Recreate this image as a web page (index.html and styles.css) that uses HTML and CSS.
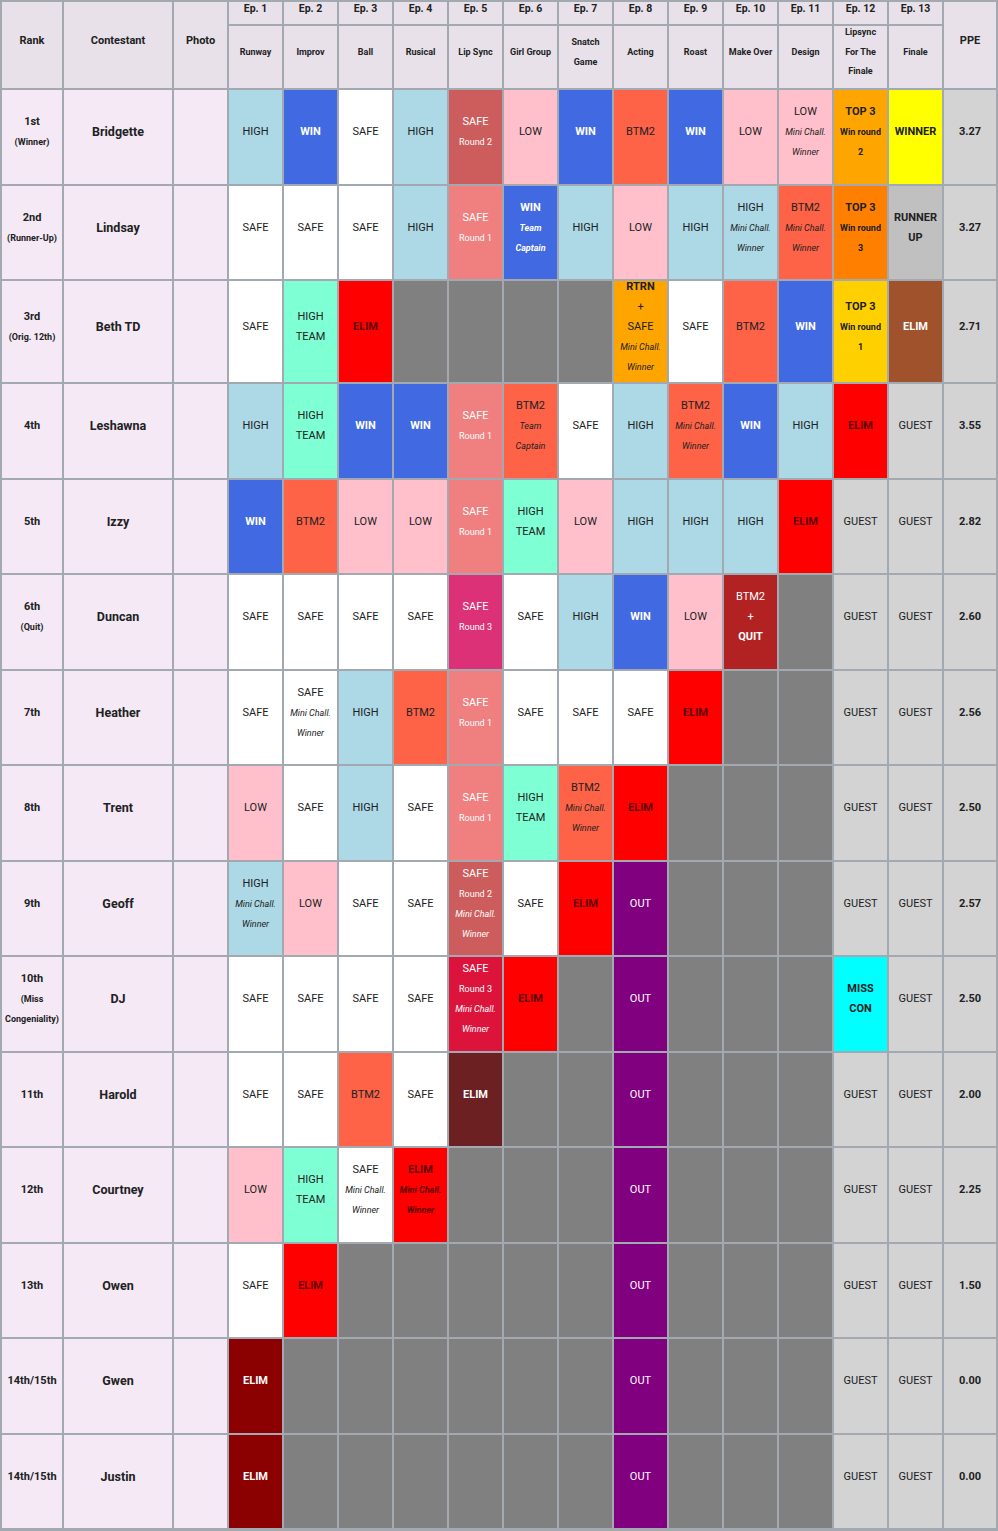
FILE: index.html
```html
<!DOCTYPE html>
<html lang="en">
<head>
<meta charset="utf-8">
<title>Contestant progress</title>
<link rel="stylesheet" href="styles.css">
</head>
<body>
<div class="t">
  <div class="h hb span2">Rank</div>
  <div class="h hb span2">Contestant</div>
  <div class="h hb span2">Photo</div>
  <div class="h ep">Ep. 1</div>
  <div class="h ep">Ep. 2</div>
  <div class="h ep">Ep. 3</div>
  <div class="h ep">Ep. 4</div>
  <div class="h ep">Ep. 5</div>
  <div class="h ep">Ep. 6</div>
  <div class="h ep">Ep. 7</div>
  <div class="h ep">Ep. 8</div>
  <div class="h ep">Ep. 9</div>
  <div class="h ep">Ep. 10</div>
  <div class="h ep">Ep. 11</div>
  <div class="h ep">Ep. 12</div>
  <div class="h ep">Ep. 13</div>
  <div class="h hb span2">PPE</div>
  <div class="h sub">Runway</div>
  <div class="h sub">Improv</div>
  <div class="h sub">Ball</div>
  <div class="h sub">Rusical</div>
  <div class="h sub">Lip Sync</div>
  <div class="h sub">Girl Group</div>
  <div class="h sub">Snatch<br>Game</div>
  <div class="h sub">Acting</div>
  <div class="h sub">Roast</div>
  <div class="h sub">Make Over</div>
  <div class="h sub">Design</div>
  <div class="h sub">Lipsync<br>For The<br>Finale</div>
  <div class="h sub">Finale</div>

  <!-- 1 Bridgette -->
  <div class="rk"><p>1st<br><span class="sm">(Winner)</span></p></div>
  <div class="nm">Bridgette</div>
  <div class="ph"></div>
  <div class="high">HIGH</div>
  <div class="win">WIN</div>
  <div class="safe">SAFE</div>
  <div class="high">HIGH</div>
  <div class="ls2"><p>SAFE<br><span class="sm">Round 2</span></p></div>
  <div class="low">LOW</div>
  <div class="win">WIN</div>
  <div class="btm">BTM2</div>
  <div class="win">WIN</div>
  <div class="low">LOW</div>
  <div class="low"><p>LOW<br><i class="sm">Mini Chall.<br>Winner</i></p></div>
  <div class="top-a"><p><b>TOP 3</b><br><b class="sm">Win round<br>2</b></p></div>
  <div class="winner">WINNER</div>
  <div class="ppe">3.27</div>

  <!-- 2 Lindsay -->
  <div class="rk"><p>2nd<br><span class="sm">(Runner-Up)</span></p></div>
  <div class="nm">Lindsay</div>
  <div class="ph"></div>
  <div class="safe">SAFE</div>
  <div class="safe">SAFE</div>
  <div class="safe">SAFE</div>
  <div class="high">HIGH</div>
  <div class="ls1"><p>SAFE<br><span class="sm">Round 1</span></p></div>
  <div class="win"><p>WIN<br><i class="sm">Team<br>Captain</i></p></div>
  <div class="high">HIGH</div>
  <div class="low">LOW</div>
  <div class="high">HIGH</div>
  <div class="high"><p>HIGH<br><i class="sm">Mini Chall.<br>Winner</i></p></div>
  <div class="btm"><p>BTM2<br><i class="sm">Mini Chall.<br>Winner</i></p></div>
  <div class="top-b"><p><b>TOP 3</b><br><b class="sm">Win round<br>3</b></p></div>
  <div class="runner">RUNNER<br>UP</div>
  <div class="ppe">3.27</div>

  <!-- 3 Beth TD -->
  <div class="rk"><p>3rd<br><span class="sm">(Orig. 12th)</span></p></div>
  <div class="nm">Beth TD</div>
  <div class="ph"></div>
  <div class="safe">SAFE</div>
  <div class="team">HIGH<br>TEAM</div>
  <div class="elim">ELIM</div>
  <div class="na"></div>
  <div class="na"></div>
  <div class="na"></div>
  <div class="na"></div>
  <div class="rtrn"><p><b>RTRN</b><br>+<br>SAFE<br><i class="sm">Mini Chall.<br>Winner</i></p></div>
  <div class="safe">SAFE</div>
  <div class="btm">BTM2</div>
  <div class="win">WIN</div>
  <div class="top-c"><p><b>TOP 3</b><br><b class="sm">Win round<br>1</b></p></div>
  <div class="elim-brown">ELIM</div>
  <div class="ppe">2.71</div>

  <!-- 4 Leshawna -->
  <div class="rk">4th</div>
  <div class="nm">Leshawna</div>
  <div class="ph"></div>
  <div class="high">HIGH</div>
  <div class="team">HIGH<br>TEAM</div>
  <div class="win">WIN</div>
  <div class="win">WIN</div>
  <div class="ls1"><p>SAFE<br><span class="sm">Round 1</span></p></div>
  <div class="btm"><p>BTM2<br><i class="sm">Team<br>Captain</i></p></div>
  <div class="safe">SAFE</div>
  <div class="high">HIGH</div>
  <div class="btm"><p>BTM2<br><i class="sm">Mini Chall.<br>Winner</i></p></div>
  <div class="win">WIN</div>
  <div class="high">HIGH</div>
  <div class="elim">ELIM</div>
  <div class="guest">GUEST</div>
  <div class="ppe">3.55</div>

  <!-- 5 Izzy -->
  <div class="rk">5th</div>
  <div class="nm">Izzy</div>
  <div class="ph"></div>
  <div class="win">WIN</div>
  <div class="btm">BTM2</div>
  <div class="low">LOW</div>
  <div class="low">LOW</div>
  <div class="ls1"><p>SAFE<br><span class="sm">Round 1</span></p></div>
  <div class="team">HIGH<br>TEAM</div>
  <div class="low">LOW</div>
  <div class="high">HIGH</div>
  <div class="high">HIGH</div>
  <div class="high">HIGH</div>
  <div class="elim">ELIM</div>
  <div class="guest">GUEST</div>
  <div class="guest">GUEST</div>
  <div class="ppe">2.82</div>

  <!-- 6 Duncan -->
  <div class="rk"><p>6th<br><span class="sm">(Quit)</span></p></div>
  <div class="nm">Duncan</div>
  <div class="ph"></div>
  <div class="safe">SAFE</div>
  <div class="safe">SAFE</div>
  <div class="safe">SAFE</div>
  <div class="safe">SAFE</div>
  <div class="ls3"><p>SAFE<br><span class="sm">Round 3</span></p></div>
  <div class="safe">SAFE</div>
  <div class="high">HIGH</div>
  <div class="win">WIN</div>
  <div class="low">LOW</div>
  <div class="quit"><p>BTM2<br>+<br><b>QUIT</b></p></div>
  <div class="na"></div>
  <div class="guest">GUEST</div>
  <div class="guest">GUEST</div>
  <div class="ppe">2.60</div>

  <!-- 7 Heather -->
  <div class="rk">7th</div>
  <div class="nm">Heather</div>
  <div class="ph"></div>
  <div class="safe">SAFE</div>
  <div class="safe"><p>SAFE<br><i class="sm">Mini Chall.<br>Winner</i></p></div>
  <div class="high">HIGH</div>
  <div class="btm">BTM2</div>
  <div class="ls1"><p>SAFE<br><span class="sm">Round 1</span></p></div>
  <div class="safe">SAFE</div>
  <div class="safe">SAFE</div>
  <div class="safe">SAFE</div>
  <div class="elim">ELIM</div>
  <div class="na"></div>
  <div class="na"></div>
  <div class="guest">GUEST</div>
  <div class="guest">GUEST</div>
  <div class="ppe">2.56</div>

  <!-- 8 Trent -->
  <div class="rk">8th</div>
  <div class="nm">Trent</div>
  <div class="ph"></div>
  <div class="low">LOW</div>
  <div class="safe">SAFE</div>
  <div class="high">HIGH</div>
  <div class="safe">SAFE</div>
  <div class="ls1"><p>SAFE<br><span class="sm">Round 1</span></p></div>
  <div class="team">HIGH<br>TEAM</div>
  <div class="btm"><p>BTM2<br><i class="sm">Mini Chall.<br>Winner</i></p></div>
  <div class="elim">ELIM</div>
  <div class="na"></div>
  <div class="na"></div>
  <div class="na"></div>
  <div class="guest">GUEST</div>
  <div class="guest">GUEST</div>
  <div class="ppe">2.50</div>

  <!-- 9 Geoff -->
  <div class="rk">9th</div>
  <div class="nm">Geoff</div>
  <div class="ph"></div>
  <div class="high"><p>HIGH<br><i class="sm">Mini Chall.<br>Winner</i></p></div>
  <div class="low">LOW</div>
  <div class="safe">SAFE</div>
  <div class="safe">SAFE</div>
  <div class="ls2"><p>SAFE<br><span class="sm">Round 2</span><br><i class="sm">Mini Chall.<br>Winner</i></p></div>
  <div class="safe">SAFE</div>
  <div class="elim">ELIM</div>
  <div class="out">OUT</div>
  <div class="na"></div>
  <div class="na"></div>
  <div class="na"></div>
  <div class="guest">GUEST</div>
  <div class="guest">GUEST</div>
  <div class="ppe">2.57</div>

  <!-- 10 DJ -->
  <div class="rk"><p>10th<br><span class="sm">(Miss Congeniality)</span></p></div>
  <div class="nm">DJ</div>
  <div class="ph"></div>
  <div class="safe">SAFE</div>
  <div class="safe">SAFE</div>
  <div class="safe">SAFE</div>
  <div class="safe">SAFE</div>
  <div class="ls3c"><p>SAFE<br><span class="sm">Round 3</span><br><i class="sm">Mini Chall.<br>Winner</i></p></div>
  <div class="elim">ELIM</div>
  <div class="na"></div>
  <div class="out">OUT</div>
  <div class="na"></div>
  <div class="na"></div>
  <div class="na"></div>
  <div class="miss">MISS<br>CON</div>
  <div class="guest">GUEST</div>
  <div class="ppe">2.50</div>

  <!-- 11 Harold -->
  <div class="rk">11th</div>
  <div class="nm">Harold</div>
  <div class="ph"></div>
  <div class="safe">SAFE</div>
  <div class="safe">SAFE</div>
  <div class="btm">BTM2</div>
  <div class="safe">SAFE</div>
  <div class="elim-wine">ELIM</div>
  <div class="na"></div>
  <div class="na"></div>
  <div class="out">OUT</div>
  <div class="na"></div>
  <div class="na"></div>
  <div class="na"></div>
  <div class="guest">GUEST</div>
  <div class="guest">GUEST</div>
  <div class="ppe">2.00</div>

  <!-- 12 Courtney -->
  <div class="rk">12th</div>
  <div class="nm">Courtney</div>
  <div class="ph"></div>
  <div class="low">LOW</div>
  <div class="team">HIGH<br>TEAM</div>
  <div class="safe"><p>SAFE<br><i class="sm">Mini Chall.<br>Winner</i></p></div>
  <div class="elim"><p>ELIM<br><i class="sm">Mini Chall.<br>Winner</i></p></div>
  <div class="na"></div>
  <div class="na"></div>
  <div class="na"></div>
  <div class="out">OUT</div>
  <div class="na"></div>
  <div class="na"></div>
  <div class="na"></div>
  <div class="guest">GUEST</div>
  <div class="guest">GUEST</div>
  <div class="ppe">2.25</div>

  <!-- 13 Owen -->
  <div class="rk">13th</div>
  <div class="nm">Owen</div>
  <div class="ph"></div>
  <div class="safe">SAFE</div>
  <div class="elim">ELIM</div>
  <div class="na"></div>
  <div class="na"></div>
  <div class="na"></div>
  <div class="na"></div>
  <div class="na"></div>
  <div class="out">OUT</div>
  <div class="na"></div>
  <div class="na"></div>
  <div class="na"></div>
  <div class="guest">GUEST</div>
  <div class="guest">GUEST</div>
  <div class="ppe">1.50</div>

  <!-- 14 Gwen -->
  <div class="rk">14th/15th</div>
  <div class="nm">Gwen</div>
  <div class="ph"></div>
  <div class="elim-dk">ELIM</div>
  <div class="na"></div>
  <div class="na"></div>
  <div class="na"></div>
  <div class="na"></div>
  <div class="na"></div>
  <div class="na"></div>
  <div class="out">OUT</div>
  <div class="na"></div>
  <div class="na"></div>
  <div class="na"></div>
  <div class="guest">GUEST</div>
  <div class="guest">GUEST</div>
  <div class="ppe">0.00</div>

  <!-- 15 Justin -->
  <div class="rk">14th/15th</div>
  <div class="nm">Justin</div>
  <div class="ph"></div>
  <div class="elim-dk">ELIM</div>
  <div class="na"></div>
  <div class="na"></div>
  <div class="na"></div>
  <div class="na"></div>
  <div class="na"></div>
  <div class="na"></div>
  <div class="out">OUT</div>
  <div class="na"></div>
  <div class="na"></div>
  <div class="na"></div>
  <div class="guest">GUEST</div>
  <div class="guest">GUEST</div>
  <div class="ppe">0.00</div>
</div>
</body>
</html>
```

FILE: styles.css
```css
html, body {
  margin: 0;
  padding: 0;
  background: #ffffff;
}

.t {
  display: grid;
  grid-template-columns: 60px 108px 53px repeat(13, 53px) 52px;
  grid-template-rows: 22px 62px repeat(2, 93.5px) 101px repeat(12, 93.5px);
  gap: 2px;
  padding: 2px 2px 3px;
  width: 998px;
  box-sizing: border-box;
  background: #a2a9b1;
  font-family: Roboto, "Liberation Sans", Arial, sans-serif;
  font-size: 11px;
  line-height: 20px;
  color: #202122;
}

.t > div {
  display: flex;
  flex-direction: column;
  justify-content: center;
  align-items: center;
  text-align: center;
  padding: 0 2px 9px;
  min-width: 0;
  min-height: 0;
  box-sizing: border-box;
  background: #ffffff;
}

.t p {
  margin: 0;
}

.t .sm {
  font-size: 9px;
}

/* header */
.t .h {
  background: #e9e1e9;
  font-weight: 700;
}
.t .span2 {
  grid-row: span 2;
}
.t .hb {
  font-size: 11px;
}
.t .ep {
  font-size: 10.5px;
}
.t .sub {
  font-size: 9px;
  line-height: 19.5px;
}

/* first columns */
.t .rk {
  background: #f4e9f4;
  font-weight: 700;
  font-size: 11px;
}
.t .nm {
  background: #f4e9f4;
  font-weight: 700;
  font-size: 12.5px;
}
.t .ph {
  background: #f4e9f4;
}

/* outcomes */
.t .high { background: #add8e6; }
.t .safe { background: #ffffff; }
.t .low { background: #ffc0cb; }
.t .btm { background: #ff6347; }
.t .team { background: #7fffd4; }
.t .na { background: #808080; }
.t .guest { background: #d3d3d3; }
.t .ppe { background: #d3d3d3; font-weight: 700; }

.t .win {
  background: #4169e1;
  color: #ffffff;
  font-weight: 700;
}
.t .elim {
  background: #ff0000;
  color: #5e0000;
  font-weight: 700;
}
.t .elim-dk {
  background: #8b0000;
  color: #ffffff;
  font-weight: 700;
}
.t .elim-wine {
  background: #6c2022;
  color: #ffffff;
  font-weight: 700;
}
.t .elim-brown {
  background: #a0522d;
  color: #ffffff;
  font-weight: 700;
}
.t .ls1 { background: #f08080; color: #ffffff; }
.t .ls2 { background: #cd5c5c; color: #ffffff; }
.t .ls3 { background: #dd3177; color: #ffffff; }
.t .ls3c { background: #dc143c; color: #ffffff; }

.t .top-a { background: #ffa500; }
.t .top-b { background: #ff7f00; }
.t .top-c { background: #ffd000; }
.t .rtrn { background: #ffa500; }
.t .winner { background: #ffff00; font-weight: 700; }
.t .runner { background: #c0c0c0; font-weight: 700; }
.t .miss { background: #00ffff; font-weight: 700; }
.t .out { background: #800080; color: #ffffff; }
.t .quit { background: #b22222; color: #ffffff; }
```
